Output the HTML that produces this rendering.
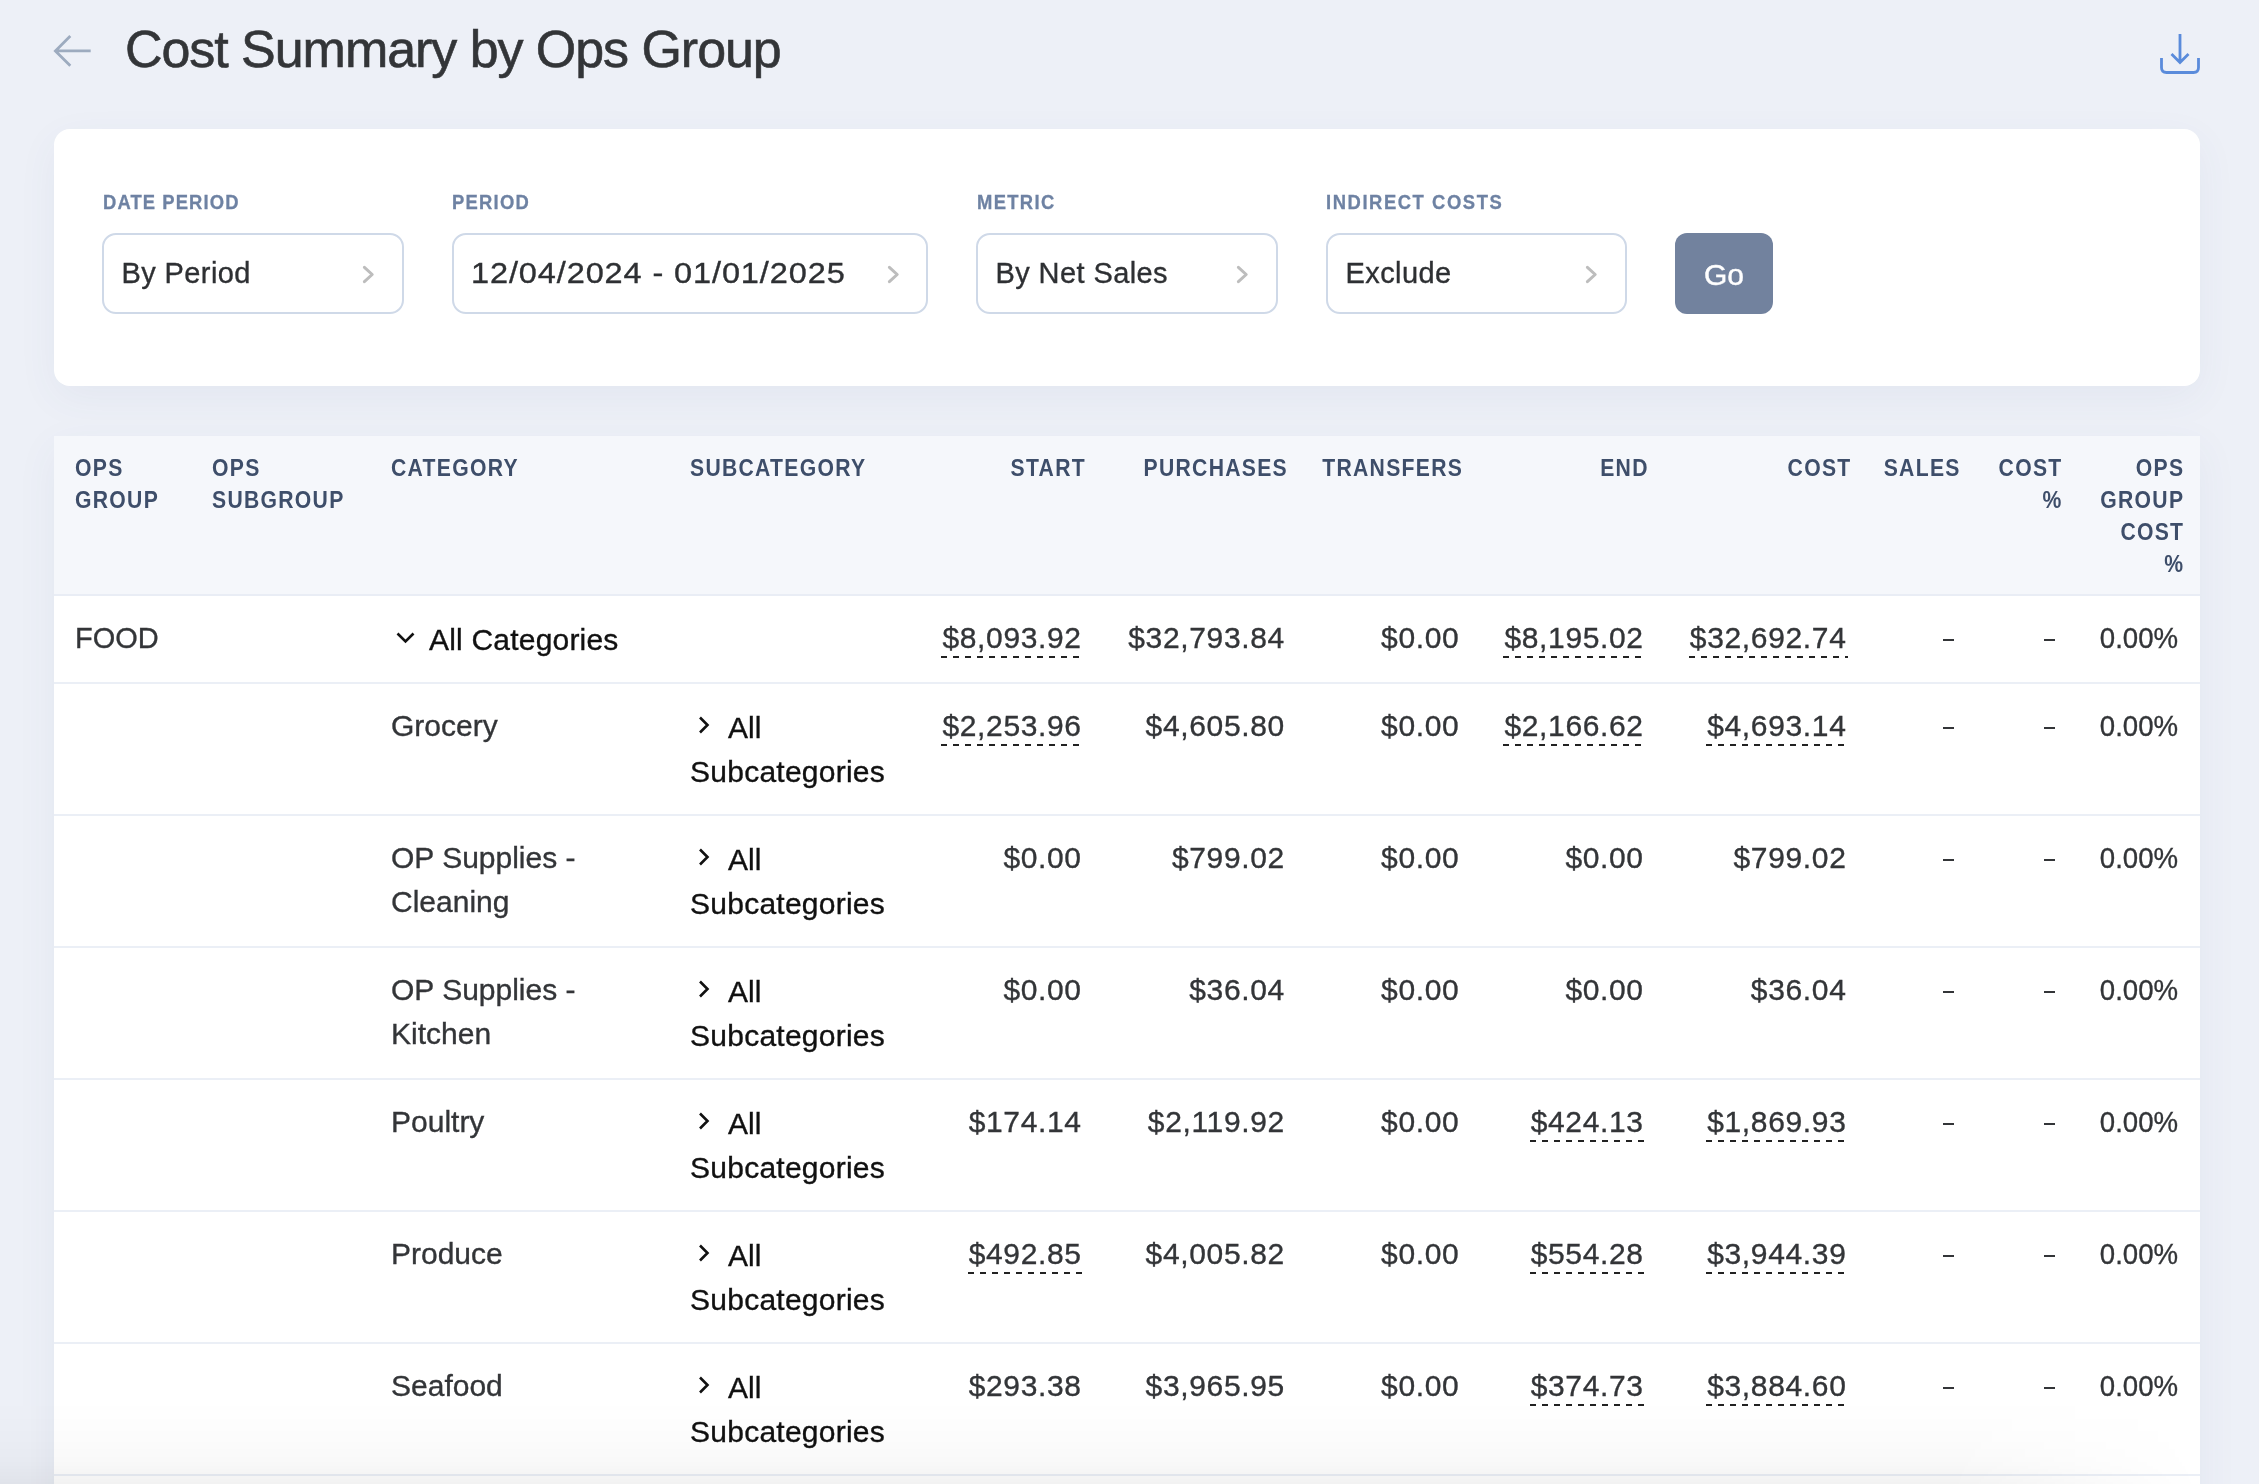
<!DOCTYPE html>
<html>
<head>
<meta charset="utf-8">
<style>
*{margin:0;padding:0;box-sizing:border-box}
html,body{width:2259px;height:1484px;overflow:hidden;background:#EDF0F7;font-family:"Liberation Sans",sans-serif;position:relative;-webkit-font-smoothing:antialiased}
.layer{position:absolute;left:0;top:0;width:2259px;height:1484px;will-change:transform}
.abs{position:absolute;white-space:nowrap}
#title{left:125px;top:18.5px;font-size:52px;line-height:60px;color:#333538;letter-spacing:-1.05px;-webkit-text-stroke:0.6px #333538}
.card{position:absolute;left:54px;top:129px;width:2146px;height:257px;background:#fff;border-radius:16px;box-shadow:0 12px 40px rgba(60,80,130,0.06)}
.lbl{position:absolute;top:190px;font-size:20px;line-height:24px;font-weight:bold;color:#6E82A3;letter-spacing:1.2px;transform:scaleX(0.92);transform-origin:0 0;-webkit-text-stroke:0.3px #6E82A3}
.box{position:absolute;top:233px;height:81px;border:2px solid #CFD9E8;border-radius:14px;background:#fff}
.box .t{position:absolute;left:17.5px;top:20px;font-size:29px;line-height:36px;color:#2E3033;white-space:nowrap;letter-spacing:0.4px;-webkit-text-stroke:0.35px #2E3033}
.box svg{position:absolute;top:30px}
.go{position:absolute;left:1675px;top:233px;width:98px;height:81px;background:#72829E;border-radius:12px;color:#fff;font-size:30px;line-height:83px;text-align:center;-webkit-text-stroke:0.4px #fff}
.tbl{position:absolute;left:54px;top:436px;width:2146px;height:1100px;background:#fff;box-shadow:0 12px 40px rgba(60,80,130,0.06)}
.thead{position:absolute;left:54px;top:436px;width:2146px;height:160px;background:#F5F7FB;border-bottom:2px solid #E9EDF5}
.row{position:absolute;left:54px;width:2146px;background:#fff;border-bottom:2px solid #EBEFF6}
.p{letter-spacing:0;text-align:right;transform:scaleX(0.92);transform-origin:100% 0}
.bar{position:absolute;width:10.8px;height:2.7px;background:#333538}
.h{position:absolute;font-size:23px;line-height:32px;font-weight:bold;color:#3E4E6A;letter-spacing:1.4px;white-space:nowrap;transform:scaleX(0.92);transform-origin:0 0}
.hr{text-align:right;transform-origin:100% 0;margin-right:-1.4px}
.c{position:absolute;font-size:30px;line-height:45px;color:#333538;white-space:nowrap;-webkit-text-stroke:0.35px #333538}
.c.blk{-webkit-text-stroke:0.35px #111}
.n{letter-spacing:0.65px;text-align:right}
.blk{color:#111}
.u{position:relative}
.u::after{content:"";position:absolute;left:-1px;right:-1px;bottom:-4px;height:2px;background:repeating-linear-gradient(to right,#222 0 6px,transparent 6px 12px)}
.shade{position:absolute;left:0;top:1400px;width:2200px;height:84px;background:linear-gradient(to bottom,rgba(0,0,0,0) 0%,rgba(0,0,0,0.01) 45%,rgba(0,0,0,0.024) 72%,rgba(0,0,0,0.05) 100%);-webkit-mask-image:linear-gradient(to right,#000 0,#000 1950px,transparent 2200px)}
</style>
</head>
<body>
<div class="layer">
<!-- back arrow -->
<svg class="abs" style="left:50px;top:30px" width="46" height="42" viewBox="50 30 46 42">
<path d="M70.3 36.1 L55.4 50.9 L70.3 65.7 M55.4 50.9 H90.7" fill="none" stroke="#9DABBF" stroke-width="2.8" stroke-linecap="butt"/>
</svg>
<div id="title" class="abs">Cost Summary by Ops Group</div>
<!-- download -->
<svg class="abs" style="left:2155px;top:28px" width="50" height="50" viewBox="2155 28 50 50">
<path d="M2180 34 V61 M2171.5 54 L2180 62.5 L2188.5 54" fill="none" stroke="#5A8BDB" stroke-width="2.8"/>
<path d="M2161.5 58 V67.5 Q2161.5 72.5 2166.5 72.5 H2193.5 Q2198.5 72.5 2198.5 67.5 V58" fill="none" stroke="#5A8BDB" stroke-width="2.8"/>
</svg>

<div class="card"></div>
<div class="lbl" style="left:103px">DATE PERIOD</div>
<div class="lbl" style="left:452px;letter-spacing:1.35px">PERIOD</div>
<div class="lbl" style="left:976.5px;letter-spacing:1.45px">METRIC</div>
<div class="lbl" style="left:1326px;letter-spacing:1.7px">INDIRECT COSTS</div>

<div class="box" style="left:102px;width:302px"><div class="t">By Period</div>
<svg style="left:258px;top:29px" width="14" height="22" viewBox="0 0 14 22"><path d="M2.4 3.3 L10.2 10.5 L2.4 17.7" fill="none" stroke="#BDBDBD" stroke-width="3" stroke-linecap="round" stroke-linejoin="round"/></svg></div>
<div class="box" style="left:452px;width:476px"><div class="t" style="letter-spacing:0.8px;left:17px;transform:scaleX(1.12);transform-origin:0 0">12/04/2024 - 01/01/2025</div>
<svg style="left:432.8px;top:29px" width="14" height="22" viewBox="0 0 14 22"><path d="M2.4 3.3 L10.2 10.5 L2.4 17.7" fill="none" stroke="#BDBDBD" stroke-width="3" stroke-linecap="round" stroke-linejoin="round"/></svg></div>
<div class="box" style="left:976px;width:302px"><div class="t">By Net Sales</div>
<svg style="left:257.7px;top:29px" width="14" height="22" viewBox="0 0 14 22"><path d="M2.4 3.3 L10.2 10.5 L2.4 17.7" fill="none" stroke="#BDBDBD" stroke-width="3" stroke-linecap="round" stroke-linejoin="round"/></svg></div>
<div class="box" style="left:1326px;width:301px"><div class="t">Exclude</div>
<svg style="left:256.7px;top:29px" width="14" height="22" viewBox="0 0 14 22"><path d="M2.4 3.3 L10.2 10.5 L2.4 17.7" fill="none" stroke="#BDBDBD" stroke-width="3" stroke-linecap="round" stroke-linejoin="round"/></svg></div>
<div class="go">Go</div>

<div class="tbl"></div>
<!--TABLE-->
<div class="thead"></div>
<div class="row" style="top:596px;height:88px"></div>
<div class="row" style="top:684px;height:132px"></div>
<div class="row" style="top:816px;height:132px"></div>
<div class="row" style="top:948px;height:132px"></div>
<div class="row" style="top:1080px;height:132px"></div>
<div class="row" style="top:1212px;height:132px"></div>
<div class="row" style="top:1344px;height:132px"></div>
<div class="row" style="top:1476px;height:40px;border:0"></div>
<div class="c" style="left:75px;top:615px;transform:scaleX(0.965);transform-origin:0 0">FOOD</div>
<svg class="abs" style="left:394px;top:629px" width="24" height="18" viewBox="0 0 24 18"><path d="M3.5 4.5 L11.5 12.5 L19.5 4.5" fill="none" stroke="#111" stroke-width="2.6"/></svg>
<div class="c blk" style="left:429px;top:617px;letter-spacing:0.2px">All Categories</div>
<div class="c n" style="right:1177.3px;top:615px"><span class="u">$8,093.92</span></div>
<div class="c n" style="right:974.0999999999999px;top:615px">$32,793.84</div>
<div class="c n" style="right:799.5999999999999px;top:615px">$0.00</div>
<div class="c n" style="right:615.3px;top:615px"><span class="u">$8,195.02</span></div>
<div class="c n" style="right:412.5px;top:615px"><span class="u">$32,692.74</span></div>
<div class="bar" style="left:1943px;top:638.6px"></div>
<div class="bar" style="left:2044.2px;top:638.6px"></div>
<div class="c p" style="right:80.5px;top:615px">0.00%</div>
<div class="c" style="left:391px;top:703px">Grocery</div>
<svg class="abs" style="left:695px;top:714px" width="20" height="22" viewBox="0 0 20 22"><path d="M5 3.5 L12.5 11 L5 18.5" fill="none" stroke="#111" stroke-width="2.6"/></svg>
<div class="c blk" style="left:728px;top:705px">All</div>
<div class="c blk" style="left:690px;top:749px;letter-spacing:0.25px">Subcategories</div>
<div class="c n" style="right:1177.3px;top:703px"><span class="u">$2,253.96</span></div>
<div class="c n" style="right:974.0999999999999px;top:703px">$4,605.80</div>
<div class="c n" style="right:799.5999999999999px;top:703px">$0.00</div>
<div class="c n" style="right:615.3px;top:703px"><span class="u">$2,166.62</span></div>
<div class="c n" style="right:412.5px;top:703px"><span class="u">$4,693.14</span></div>
<div class="bar" style="left:1943px;top:726.6px"></div>
<div class="bar" style="left:2044.2px;top:726.6px"></div>
<div class="c p" style="right:80.5px;top:703px">0.00%</div>
<div class="c" style="left:391px;top:835px">OP Supplies -</div>
<div class="c" style="left:391px;top:879px">Cleaning</div>
<svg class="abs" style="left:695px;top:846px" width="20" height="22" viewBox="0 0 20 22"><path d="M5 3.5 L12.5 11 L5 18.5" fill="none" stroke="#111" stroke-width="2.6"/></svg>
<div class="c blk" style="left:728px;top:837px">All</div>
<div class="c blk" style="left:690px;top:881px;letter-spacing:0.25px">Subcategories</div>
<div class="c n" style="right:1177.3px;top:835px">$0.00</div>
<div class="c n" style="right:974.0999999999999px;top:835px">$799.02</div>
<div class="c n" style="right:799.5999999999999px;top:835px">$0.00</div>
<div class="c n" style="right:615.3px;top:835px">$0.00</div>
<div class="c n" style="right:412.5px;top:835px">$799.02</div>
<div class="bar" style="left:1943px;top:858.6px"></div>
<div class="bar" style="left:2044.2px;top:858.6px"></div>
<div class="c p" style="right:80.5px;top:835px">0.00%</div>
<div class="c" style="left:391px;top:967px">OP Supplies -</div>
<div class="c" style="left:391px;top:1011px">Kitchen</div>
<svg class="abs" style="left:695px;top:978px" width="20" height="22" viewBox="0 0 20 22"><path d="M5 3.5 L12.5 11 L5 18.5" fill="none" stroke="#111" stroke-width="2.6"/></svg>
<div class="c blk" style="left:728px;top:969px">All</div>
<div class="c blk" style="left:690px;top:1013px;letter-spacing:0.25px">Subcategories</div>
<div class="c n" style="right:1177.3px;top:967px">$0.00</div>
<div class="c n" style="right:974.0999999999999px;top:967px">$36.04</div>
<div class="c n" style="right:799.5999999999999px;top:967px">$0.00</div>
<div class="c n" style="right:615.3px;top:967px">$0.00</div>
<div class="c n" style="right:412.5px;top:967px">$36.04</div>
<div class="bar" style="left:1943px;top:990.6px"></div>
<div class="bar" style="left:2044.2px;top:990.6px"></div>
<div class="c p" style="right:80.5px;top:967px">0.00%</div>
<div class="c" style="left:391px;top:1099px">Poultry</div>
<svg class="abs" style="left:695px;top:1110px" width="20" height="22" viewBox="0 0 20 22"><path d="M5 3.5 L12.5 11 L5 18.5" fill="none" stroke="#111" stroke-width="2.6"/></svg>
<div class="c blk" style="left:728px;top:1101px">All</div>
<div class="c blk" style="left:690px;top:1145px;letter-spacing:0.25px">Subcategories</div>
<div class="c n" style="right:1177.3px;top:1099px">$174.14</div>
<div class="c n" style="right:974.0999999999999px;top:1099px">$2,119.92</div>
<div class="c n" style="right:799.5999999999999px;top:1099px">$0.00</div>
<div class="c n" style="right:615.3px;top:1099px"><span class="u">$424.13</span></div>
<div class="c n" style="right:412.5px;top:1099px"><span class="u">$1,869.93</span></div>
<div class="bar" style="left:1943px;top:1122.6px"></div>
<div class="bar" style="left:2044.2px;top:1122.6px"></div>
<div class="c p" style="right:80.5px;top:1099px">0.00%</div>
<div class="c" style="left:391px;top:1231px">Produce</div>
<svg class="abs" style="left:695px;top:1242px" width="20" height="22" viewBox="0 0 20 22"><path d="M5 3.5 L12.5 11 L5 18.5" fill="none" stroke="#111" stroke-width="2.6"/></svg>
<div class="c blk" style="left:728px;top:1233px">All</div>
<div class="c blk" style="left:690px;top:1277px;letter-spacing:0.25px">Subcategories</div>
<div class="c n" style="right:1177.3px;top:1231px"><span class="u">$492.85</span></div>
<div class="c n" style="right:974.0999999999999px;top:1231px">$4,005.82</div>
<div class="c n" style="right:799.5999999999999px;top:1231px">$0.00</div>
<div class="c n" style="right:615.3px;top:1231px"><span class="u">$554.28</span></div>
<div class="c n" style="right:412.5px;top:1231px"><span class="u">$3,944.39</span></div>
<div class="bar" style="left:1943px;top:1254.6px"></div>
<div class="bar" style="left:2044.2px;top:1254.6px"></div>
<div class="c p" style="right:80.5px;top:1231px">0.00%</div>
<div class="c" style="left:391px;top:1363px">Seafood</div>
<svg class="abs" style="left:695px;top:1374px" width="20" height="22" viewBox="0 0 20 22"><path d="M5 3.5 L12.5 11 L5 18.5" fill="none" stroke="#111" stroke-width="2.6"/></svg>
<div class="c blk" style="left:728px;top:1365px">All</div>
<div class="c blk" style="left:690px;top:1409px;letter-spacing:0.25px">Subcategories</div>
<div class="c n" style="right:1177.3px;top:1363px">$293.38</div>
<div class="c n" style="right:974.0999999999999px;top:1363px">$3,965.95</div>
<div class="c n" style="right:799.5999999999999px;top:1363px">$0.00</div>
<div class="c n" style="right:615.3px;top:1363px"><span class="u">$374.73</span></div>
<div class="c n" style="right:412.5px;top:1363px"><span class="u">$3,884.60</span></div>
<div class="bar" style="left:1943px;top:1386.6px"></div>
<div class="bar" style="left:2044.2px;top:1386.6px"></div>
<div class="c p" style="right:80.5px;top:1363px">0.00%</div>
<div class="h" style="left:75px;top:451.5px">OPS<br>GROUP</div>
<div class="h" style="left:212px;top:451.5px">OPS<br>SUBGROUP</div>
<div class="h" style="left:391px;top:451.5px">CATEGORY</div>
<div class="h" style="left:690px;top:451.5px">SUBCATEGORY</div>
<div class="h hr" style="right:1174.6px;top:451.5px">START</div>
<div class="h hr" style="right:972.4000000000001px;top:451.5px">PURCHASES</div>
<div class="h hr" style="right:797px;top:451.5px">TRANSFERS</div>
<div class="h hr" style="right:612px;top:451.5px">END</div>
<div class="h hr" style="right:409px;top:451.5px">COST</div>
<div class="h hr" style="right:300px;top:451.5px">SALES</div>
<div class="h hr" style="right:198.30000000000018px;top:451.5px">COST<br>%</div>
<div class="h hr" style="right:76px;top:451.5px">OPS<br>GROUP<br>COST<br>%</div>
<!--/TABLE-->
<div class="shade"></div>
</div>
</body>
</html>
